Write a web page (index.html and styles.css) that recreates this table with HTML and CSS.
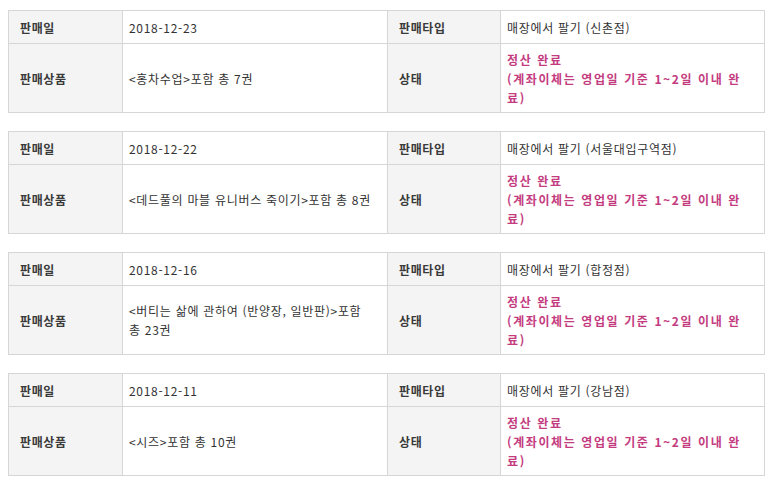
FILE: index.html
```html
<!DOCTYPE html>
<html lang="ko">
<head>
<meta charset="utf-8">
<link rel="stylesheet" href="styles.css">
</head>
<body>
<div class="list">
  <table class="sale">
    <colgroup><col class="c1"><col class="c2"><col class="c3"><col class="c4"></colgroup>
    <tr class="r1"><th>판매일</th><td>2018-12-23</td><th>판매타입</th><td>매장에서 팔기 (신촌점)</td></tr>
    <tr class="r2"><th>판매상품</th><td>&lt;홍차수업&gt;포함 총 7권</td><th>상태</th><td class="status">정산 완료<br>(계좌이체는 영업일 기준 1~2일 이내 완료)</td></tr>
  </table>
  <table class="sale">
    <colgroup><col class="c1"><col class="c2"><col class="c3"><col class="c4"></colgroup>
    <tr class="r1"><th>판매일</th><td>2018-12-22</td><th>판매타입</th><td>매장에서 팔기 (서울대입구역점)</td></tr>
    <tr class="r2"><th>판매상품</th><td>&lt;데드풀의 마블 유니버스 죽이기&gt;포함 총 8권</td><th>상태</th><td class="status">정산 완료<br>(계좌이체는 영업일 기준 1~2일 이내 완료)</td></tr>
  </table>
  <table class="sale">
    <colgroup><col class="c1"><col class="c2"><col class="c3"><col class="c4"></colgroup>
    <tr class="r1"><th>판매일</th><td>2018-12-16</td><th>판매타입</th><td>매장에서 팔기 (합정점)</td></tr>
    <tr class="r2"><th>판매상품</th><td>&lt;버티는 삶에 관하여 (반양장, 일반판)&gt;포함 총 23권</td><th>상태</th><td class="status">정산 완료<br>(계좌이체는 영업일 기준 1~2일 이내 완료)</td></tr>
  </table>
  <table class="sale">
    <colgroup><col class="c1"><col class="c2"><col class="c3"><col class="c4"></colgroup>
    <tr class="r1"><th>판매일</th><td>2018-12-11</td><th>판매타입</th><td>매장에서 팔기 (강남점)</td></tr>
    <tr class="r2"><th>판매상품</th><td>&lt;시즈&gt;포함 총 10권</td><th>상태</th><td class="status">정산 완료<br>(계좌이체는 영업일 기준 1~2일 이내 완료)</td></tr>
  </table>
</div>
</body>
</html>
```
FILE: styles.css
```css
html, body { margin: 0; padding: 0; background: #fff; }
body {
  padding: 10px 9px 0 8px;
  font-family: "Noto Sans CJK KR", "Liberation Sans", sans-serif;
  font-size: 12px;
  color: #333;
}
.sale {
  width: 756px;
  border-collapse: collapse;
  table-layout: fixed;
  margin-bottom: 18px;
}
.c1 { width: 114px; }
.c2 { width: 265px; }
.c3 { width: 113px; }
.c4 { width: 264px; }
.sale th, .sale td {
  border: 1px solid #d6d6d6;
  line-height: 19px;
  vertical-align: middle;
  text-align: left;
}
.sale th {
  background: #f4f4f4;
  color: #3a3a3a;
  font-weight: bold;
  padding: 0 6px 0 11px;
  letter-spacing: 0.6px;
}
.sale td {
  padding: 0 12px 0 6px;
  letter-spacing: 0.7px;
}
.r1 th, .r1 td { height: 32px; }
.r2 th, .r2 td { height: 68px; }
.sale .status {
  color: #c43c80;
  font-weight: bold;
  letter-spacing: 1.6px;
}
```
